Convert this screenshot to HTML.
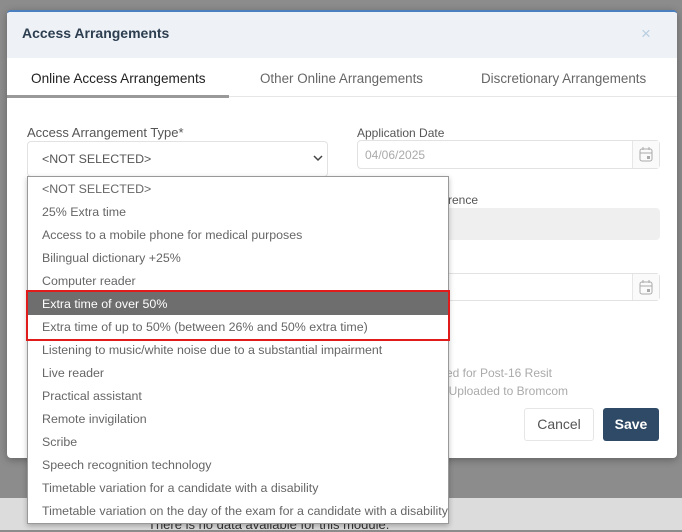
<!DOCTYPE html>
<html><head><style>
*{box-sizing:border-box;margin:0;padding:0}
body{width:682px;height:530px;overflow:hidden;background:#8c8c8c;font-family:"Liberation Sans",sans-serif;position:relative}
.abs{position:absolute}
.modal{left:7px;top:10px;width:670px;height:448px;background:#fff;border-radius:4px;border-top:2px solid #4a7fc0;box-shadow:0 2px 8px rgba(0,0,0,.3);overflow:hidden}
.hdr{left:0;top:0;width:670px;height:46px;background:#eef2f6}
.lbl{font-size:12px;color:#555}
.inp{border:1px solid #e2e2e2;border-radius:4px;background:#fff}
.dd{left:27px;top:176px;width:422px;height:348px;background:#fff;border:1px solid #999;box-shadow:0 2px 5px rgba(0,0,0,.25)}
.it{position:absolute;left:0;width:420px;height:23px;line-height:24px;padding-left:14px;font-size:12.4px;color:#666;white-space:nowrap}
</style></head><body>
<div class="abs" style="left:0;top:498px;width:682px;height:32px;background:#dcdcdc"></div>
<div class="abs" style="left:148px;top:517px;font-size:13px;color:#333">There is no data available for this module.</div>
<div class="abs modal">
 <div class="abs hdr"></div>
 <div class="abs" style="left:15px;top:13px;font-size:14px;font-weight:bold;color:#2d3e50">Access Arrangements</div>
 <div class="abs" style="left:634px;top:12px;font-size:17px;color:#b8cde0">×</div>
 <div class="abs" style="left:24px;top:59px;font-size:13.6px;color:#222">Online Access Arrangements</div>
 <div class="abs" style="left:253px;top:59px;font-size:13.4px;color:#666">Other Online Arrangements</div>
 <div class="abs" style="left:474px;top:59px;font-size:13.4px;color:#666">Discretionary Arrangements</div>
 <div class="abs" style="left:0;top:84px;width:670px;height:1px;background:#e6e6e6"></div>
 <div class="abs" style="left:0;top:83px;width:222px;height:3px;background:#999"></div>
 <div class="abs lbl" style="left:20px;top:113px;font-size:13px">Access Arrangement Type*</div>
 <div class="abs inp" style="left:20px;top:129px;width:301px;height:36px"></div>
 <div class="abs" style="left:35px;top:140px;font-size:12.4px;color:#555">&lt;NOT SELECTED&gt;</div>
 <svg class="abs" style="left:306px;top:142px" width="10" height="8"><path d="M1 2l4 4 4-4" stroke="#444" stroke-width="1.5" fill="none"/></svg>
 <div class="abs lbl" style="left:350px;top:114px">Application Date</div>
 <div class="abs inp" style="left:350px;top:128px;width:303px;height:29px"></div>
 <div class="abs" style="left:625px;top:129px;width:27px;height:27px;border-left:1px solid #e6e6e6;background:#fafafa"></div>
 <div class="abs" style="left:358px;top:136px;font-size:12px;color:#aaa">04/06/2025</div>
 <svg class="abs" style="left:632px;top:134px" width="14" height="16"><rect x="1" y="3" width="12" height="12" rx="2" stroke="#aaa" fill="none"/><path d="M1 7h12M4 1v3M10 1v3" stroke="#aaa"/><rect x="8" y="10" width="3" height="3" fill="#aaa"/></svg>
 <div class="abs lbl" style="right:199px;top:181px">Candidate Reference</div>
 <div class="abs" style="left:350px;top:196px;width:303px;height:32px;background:#efefef;border-radius:4px"></div>
 <div class="abs lbl" style="left:350px;top:243px">Date</div>
 <div class="abs inp" style="left:350px;top:261px;width:303px;height:28px"></div>
 <div class="abs" style="left:625px;top:262px;width:27px;height:26px;border-left:1px solid #e6e6e6;background:#fafafa"></div>
 <svg class="abs" style="left:632px;top:267px" width="14" height="16"><rect x="1" y="3" width="12" height="12" rx="2" stroke="#aaa" fill="none"/><path d="M1 7h12M4 1v3M10 1v3" stroke="#aaa"/><rect x="8" y="10" width="3" height="3" fill="#aaa"/></svg>
 <div class="abs" style="right:125px;top:354px;font-size:12px;color:#aaa;white-space:nowrap">Awarded for Post-16 Resit</div>
 <div class="abs" style="right:109px;top:372px;font-size:12px;color:#aaa;white-space:nowrap">Not Uploaded to Bromcom</div>
 <div class="abs" style="left:517px;top:396px;width:70px;height:33px;border:1px solid #e6e6e6;border-radius:3px;font-size:14px;color:#555;text-align:center;line-height:31px">Cancel</div>
 <div class="abs" style="left:596px;top:396px;width:56px;height:33px;background:#2f4a66;border-radius:3px;font-size:14px;font-weight:bold;color:#fff;text-align:center;line-height:33px">Save</div>
</div>
<div class="abs dd">
 <div class="it" style="top:0px">&lt;NOT SELECTED&gt;</div>
 <div class="it" style="top:23px">25% Extra time</div>
 <div class="it" style="top:46px">Access to a mobile phone for medical purposes</div>
 <div class="it" style="top:69px">Bilingual dictionary +25%</div>
 <div class="it" style="top:92px">Computer reader</div>
 <div class="it" style="top:115px;background:#6e6e6e;color:#fff">Extra time of over 50%</div>
 <div class="it" style="top:138px">Extra time of up to 50% (between 26% and 50% extra time)</div>
 <div class="it" style="top:161px">Listening to music/white noise due to a substantial impairment</div>
 <div class="it" style="top:184px">Live reader</div>
 <div class="it" style="top:207px">Practical assistant</div>
 <div class="it" style="top:230px">Remote invigilation</div>
 <div class="it" style="top:253px">Scribe</div>
 <div class="it" style="top:276px">Speech recognition technology</div>
 <div class="it" style="top:299px">Timetable variation for a candidate with a disability</div>
 <div class="it" style="top:322px">Timetable variation on the day of the exam for a candidate with a disability</div>
</div>
<div class="abs" style="left:26px;top:290px;width:424px;height:51px;border:2px solid #e01b1b"></div>
</body></html>
